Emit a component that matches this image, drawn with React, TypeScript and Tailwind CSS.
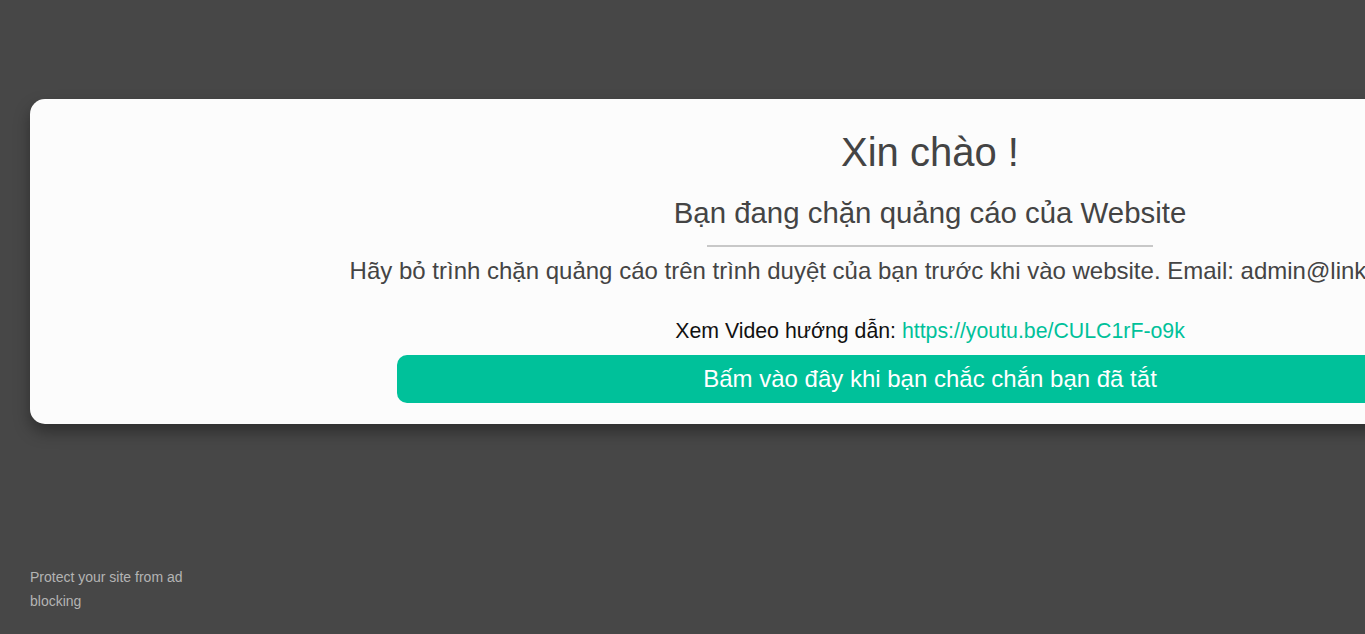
export default function App() {
  return (
    <div
      className="flex h-[634px] w-full flex-col overflow-hidden bg-[#474747] pt-[99px] pb-[21px] pl-[30px] text-[#444]"
      style={{ fontFamily: '"Liberation Sans", Arial, sans-serif' }}
    >
      <div className="w-[1800px] shrink-0 rounded-[15px] bg-[#fcfcfc] px-8 pt-[30px] pb-[21px] text-center shadow-[0_8px_16px_rgba(0,0,0,0.35)]">
        <h1 className="text-[40px] leading-[46px]">Xin chào !</h1>
        <h3 className="mt-[21px] text-[29.4px] leading-[34px]">Bạn đang chặn quảng cáo của Website</h3>
        <div className="mx-auto mt-[15px] h-[2px] w-[446px] bg-[#c8c8c8]" />
        <p className="mt-[10px] text-[24px] leading-[28px]">
          Hãy bỏ trình chặn quảng cáo trên trình duyệt của bạn trước khi vào website. Email: admin@linkneverdie.com
        </p>
        <p className="mt-[34px] text-[21.3px] leading-[25px] text-[#111]">
          Xem Video hướng dẫn: <a className="text-[#00c19a]">https://youtu.be/CULC1rF-o9k</a>
        </p>
        <button className="mx-auto mt-[11px] block h-[48px] w-[1066px] rounded-[10px] bg-[#00c19a] text-[24px] text-white">
          Bấm vào đây khi bạn chắc chắn bạn đã tắt
        </button>
      </div>
      <div className="mt-auto w-[180px] text-[14px] leading-[24px] text-[#b4b4b4]">
        Protect your site from ad blocking
      </div>
    </div>
  );
}
